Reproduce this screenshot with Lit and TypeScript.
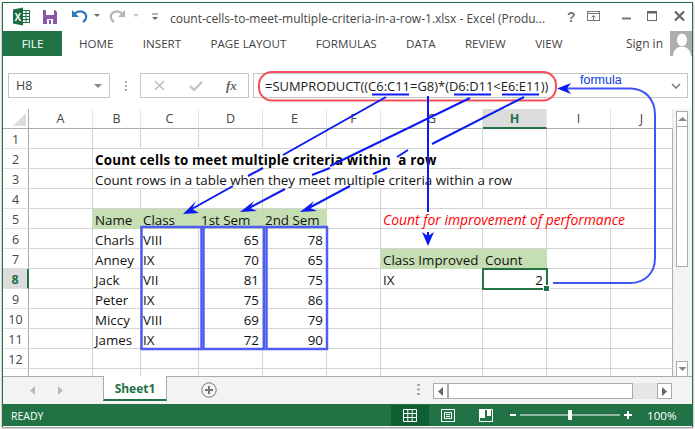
import { LitElement, html, css, svg } from 'lit'
import { customElement } from 'lit/decorators.js'

const COLS = [
  ['A', 64],
  ['B', 48],
  ['C', 58],
  ['D', 64],
  ['E', 64],
  ['F', 54],
  ['G', 102],
  ['H', 64],
  ['I', 64],
  ['J', 62],
] as const

type Cell = { t?: string; c?: string; span?: number }

// sheet content, keyed by row then column
const SHEET: Record<number, Record<string, Cell>> = {
  2: { B: { t: 'Count cells to meet multiple criteria within  a row', c: 'bold', span: 6 } },
  3: { B: { t: 'Count rows in a table when they meet multiple criteria within a row', span: 7 } },
  5: {
    B: { t: 'Name', c: 'fill' },
    C: { t: 'Class', c: 'fill' },
    D: { t: '1st Sem', c: 'fill' },
    E: { t: '2nd Sem', c: 'fill' },
    G: { t: 'Count for improvement of performance', c: 'red', span: 4 },
  },
  6: { B: { t: 'Charls' }, C: { t: 'VIII' }, D: { t: '65', c: 'num' }, E: { t: '78', c: 'num' } },
  7: {
    B: { t: 'Anney' },
    C: { t: 'IX' },
    D: { t: '70', c: 'num' },
    E: { t: '65', c: 'num' },
    G: { t: 'Class Improved', c: 'fill' },
    H: { t: 'Count', c: 'fill' },
  },
  8: {
    B: { t: 'Jack' },
    C: { t: 'VII' },
    D: { t: '81', c: 'num' },
    E: { t: '75', c: 'num' },
    G: { t: 'IX' },
    H: { t: '2', c: 'num active' },
  },
  9: { B: { t: 'Peter' }, C: { t: 'IX' }, D: { t: '75', c: 'num' }, E: { t: '86', c: 'num' } },
  10: { B: { t: 'Miccy' }, C: { t: 'VIII' }, D: { t: '69', c: 'num' }, E: { t: '79', c: 'num' } },
  11: { B: { t: 'James' }, C: { t: 'IX' }, D: { t: '72', c: 'num' }, E: { t: '90', c: 'num' } },
}

const BLUE = '#0a1cf0'

// arrow shafts, broken where the original has gaps over the cell text
const SEGMENTS = [
  [372, 94.5, 409, 94.5],
  [454, 94.5, 491, 94.5],
  [502, 94.5, 539, 94.5],
  [386, 97, 283, 155],
  [263, 168, 248, 176],
  [233, 186, 190, 210],
  [470, 98, 330, 166],
  [330, 168, 312, 175],
  [285, 189, 247, 209],
  [524, 97, 432, 144],
  [408, 150, 397, 157],
  [387, 168, 373, 174],
  [350, 186, 307, 209],
  [428, 96, 428, 212],
  [428, 232, 428, 242],
]

const HEADS = [
  '183,214 196,201 192,209 199,213',
  '240,212 254,201 250,208 257,211',
  '300,212 314,201 310,208 317,211',
  '428,246 422,232 428,236 434,232',
  '557,88.5 571,83 567,88.5 571,94',
]

@customElement('app-root')
export class AppRoot extends LitElement {
  static styles = css`
    :host {
      display: block;
      position: relative;
      width: 695px;
      height: 429px;
      overflow: hidden;
      background: #fff;
      font-family: 'Open Sans', 'Liberation Sans', sans-serif;
      color: #444;
    }
    .window {
      position: absolute;
      left: 2px;
      top: 2px;
      width: 691px;
      height: 425px;
      box-sizing: border-box;
      border: 1px solid #217346;
      border-bottom: 0;
      box-shadow: 0 1px 2px #777;
      display: flex;
      flex-direction: column;
      background: #fff;
    }
    svg {
      display: block;
      flex: none;
    }

    /* title bar */
    .title {
      height: 28px;
      display: flex;
      align-items: center;
      padding-left: 10px;
      font-size: 12px;
      position: relative;
    }
    .title .qat {
      width: 157px;
      flex: none;
    }
    .title .name {
      flex: 1;
      white-space: nowrap;
      margin-top: 2px;
    }
    .title .ctrl {
      margin-right: 6px;
    }

    /* ribbon tabs */
    .tabs {
      height: 25px;
      display: flex;
      align-items: center;
      font-size: 11.6px;
      gap: 29.4px;
    }
    .tabs .file {
      width: 59px;
      height: 25px;
      line-height: 25px;
      background: #217346;
      color: #fff;
      text-align: center;
      margin-right: -12.4px;
    }
    .tabs .sign {
      margin-left: auto;
      margin-right: -22.4px;
      font-size: 12px;
    }

    /* formula bar */
    .fbar {
      display: flex;
      align-items: stretch;
      padding: 17px 4px 11px 5px;
      height: 25px;
      font-size: 12.95px;
      color: #222;
    }
    .box {
      border: 1px solid #c6c6c6;
      box-sizing: border-box;
      display: flex;
      align-items: center;
    }
    .namebox {
      width: 102px;
      padding: 0 7px;
      justify-content: space-between;
      font-size: 12.5px;
      color: #444;
    }
    .grip {
      width: 30px;
    }
    .fxbox {
      width: 109px;
      margin-right: 4px;
    }
    .formula {
      flex: 1;
      padding: 0 6px 0 11px;
      justify-content: space-between;
      white-space: nowrap;
    }

    /* sheet */
    .mid {
      display: flex;
      height: 267px;
    }
    .grid {
      width: 670px;
      height: 267px;
      overflow: hidden;
      display: grid;
      grid-template-columns: 26px repeat(10, auto);
      grid-auto-rows: 20px;
      font-size: 13.35px;
      color: #111;
    }
    .hd {
      box-sizing: border-box;
      display: flex;
      align-items: center;
      justify-content: center;
      color: #444;
      font-size: 12.5px;
      background: #fff;
    }
    .hd.col {
      border-bottom: 1px solid #ababab;
      border-right: 1px solid #e6e6e6;
    }
    .hd.row {
      border-right: 1px solid #ababab;
      border-bottom: 1px solid #e0e0e0;
      padding-top: 1px;
    }
    .hd.sel {
      background: #dcdcdc;
      color: #217346;
      font-weight: 700;
    }
    .hd.col.sel {
      border-bottom: 2px solid #217346;
    }
    .hd.row.sel {
      border-right: 2px solid #217346;
    }
    .corner {
      border-bottom: 1px solid #ababab;
      border-right: 1px solid #ababab;
      box-sizing: border-box;
      padding: 4px 0 0 10px;
    }
    .cell {
      box-sizing: border-box;
      border-right: 1px solid #d4d4d4;
      border-bottom: 1px solid #d4d4d4;
      padding: 0 2px;
      white-space: pre;
      line-height: 22px;
      position: relative;
    }
    .cell.edge {
      border-right-color: #ababab;
    }
    .cell.bold {
      font-weight: 700;
      color: #000;
      letter-spacing: 0.2px;
    }
    .cell.fill {
      background: #c5dfb3;
      border-color: #c5dfb3;
    }
    .cell.red {
      color: #f00;
      font-style: italic;
      font-size: 13.9px;
    }
    .cell.num {
      text-align: right;
      padding-right: 3px;
    }
    .cell.active {
      outline: 2px solid #217346;
      outline-offset: -1px;
      z-index: 1;
    }
    .cell.active::after {
      content: '';
      position: absolute;
      right: -3px;
      bottom: -3px;
      width: 5px;
      height: 5px;
      background: #217346;
      border: 1px solid #fff;
      box-sizing: content-box;
      margin: -1px;
    }

    /* vertical scrollbar */
    .vscroll {
      width: 19px;
      background: #f3f3f3;
      display: flex;
      flex-direction: column;
      padding: 2px 4px 0 3px;
      box-sizing: border-box;
      height: 268px;
    }
    .sbtn {
      border: 1px solid #ababab;
      background: #fff;
      box-sizing: border-box;
      display: flex;
      align-items: center;
      justify-content: center;
      flex: none;
    }
    .vscroll .sbtn {
      height: 16px;
    }
    .vscroll .thumb {
      height: 140px;
      border: 1px solid #ababab;
      border-top: 0;
      background: #fff;
      box-sizing: border-box;
    }
    .vscroll .spacer {
      flex: 1;
    }

    /* sheet tabs */
    .sheets {
      height: 28px;
      background: #f3f3f3;
      display: flex;
      border-top: 1px solid #ababab;
      box-sizing: border-box;
    }
    .nav {
      width: 100px;
      display: flex;
      align-items: center;
      gap: 23px;
      padding-left: 27px;
      box-sizing: border-box;
    }
    .sheet {
      width: 64px;
      height: 25px;
      margin-top: -1px;
      background: #fff;
      box-sizing: border-box;
      border-left: 1px solid #ababab;
      border-right: 1px solid #ababab;
      border-bottom: 2px solid #217346;
      color: #217346;
      font-weight: 700;
      font-size: 12px;
      text-align: center;
      line-height: 26px;
    }
    .plus {
      margin: 5px 0 0 34px;
    }
    .dots {
      margin: 7px 0 0 200px;
    }
    .hscroll {
      margin: 6px 0 0 13px;
      width: 239px;
      height: 16px;
      display: flex;
      background: #e6e6e6;
    }
    .hscroll .sbtn {
      width: 15px;
    }
    .hscroll .thumb {
      width: 185px;
      background: #fff;
      border: 1px solid #ababab;
      box-sizing: border-box;
    }
    .hscroll .spacer {
      flex: 1;
    }

    /* status bar */
    .status {
      height: 22px;
      background: #217346;
      color: #fff;
      display: flex;
      align-items: center;
      font-size: 10.5px;
      padding-left: 8px;
      position: relative;
    }
    .status .ready {
      width: 380px;
      flex: none;
      padding-top: 1px;
    }
    .view {
      width: 38px;
      height: 21px;
      display: flex;
      align-items: center;
      justify-content: center;
    }
    .view.on {
      background: #0f5f33;
    }
    .zoom {
      font-size: 11.6px;
      margin-left: 10px;
    }

    /* annotations drawn over the sheet */
    .notes {
      position: absolute;
      left: 0;
      top: 0;
      pointer-events: none;
    }
    .notes text {
      font-family: 'Liberation Sans', sans-serif;
      font-size: 12.5px;
      fill: #0a3ce0;
    }
  `

  private tri(color = '#777', w = 8, h = 4) {
    return html`<svg width=${w} height=${h} viewBox="0 0 8 4"><path d="M0 0h8L4 4z" fill=${color} /></svg>`
  }

  private renderQat() {
    return html`<svg class="qat" height="20" viewBox="0 0 157 20">
      <path d="M0 2.500 10 0.500v18l-10-2z" fill="#1d6f42" />
      <rect x="9.500" y="3.500" width="7" height="12" fill="#fff" stroke="#1d6f42" />
      <path d="M10 6.500h6M10 9.500h6M10 12.500h6M13 4v11" stroke="#1d6f42" />
      <text x="1.500" y="13.500" font-family="Liberation Sans" font-weight="700" font-size="10" fill="#fff">X</text>
      <path d="M30 3h12l2 2v12H30z" fill="#8b55a8" />
      <rect x="33" y="3" width="8" height="5" fill="#fff" />
      <rect x="34" y="12" width="6" height="5" fill="#fff" />
      <rect x="36" y="13" width="2" height="4" fill="#8b55a8" />
      <path d="M61 7c6-5 13-2 12 4-.4 2-1.500 3-3 4" fill="none" stroke="#2d78bd" stroke-width="2.200" />
      <path d="M59 3v7h7z" fill="#2d78bd" />
      <path d="M81 7h6l-3 3z" fill="#666" />
      <path d="M110 7c-6-5-13-2-12 4 .4 2 1.500 3 3 4" fill="none" stroke="#b4b4b4" stroke-width="2.200" />
      <path d="M112 3v7h-7z" fill="#b4b4b4" />
      <path d="M120 7h6l-3 3z" fill="#c4c4c4" />
      <path d="M139 7h6" stroke="#666" />
      <path d="M139 10h6l-3 3z" fill="#666" />
    </svg>`
  }

  private renderCtrl() {
    return html`<svg class="ctrl" width="119" height="16" viewBox="0 0 119 16">
      <text x="0" y="13" font-family="Liberation Sans" font-weight="700" font-size="14" fill="#777">?</text>
      <rect x="20.500" y="2.500" width="12" height="9" fill="none" stroke="#777" />
      <path d="M21 4.500h11" stroke="#777" />
      <path d="M26.500 11V6.500M24.500 8.500l2-2 2 2" fill="none" stroke="#777" />
      <path d="M55 9.500h9" stroke="#777" stroke-width="2" />
      <rect x="80.500" y="2.500" width="9" height="9" fill="none" stroke="#666" />
      <path d="M80 3.500h10" stroke="#666" stroke-width="2" />
      <path d="M108 2.500l9 9M117 2.500l-9 9" stroke="#666" stroke-width="2.200" />
    </svg>`
  }

  private renderAvatar() {
    return html`<svg width="22" height="25" viewBox="0 0 22 25">
      <rect width="22" height="25" fill="#aeaeae" />
      <ellipse cx="12" cy="9" rx="5" ry="6.500" fill="#fff" />
      <path d="M3 25c0-6 4-8 6-9h6c2 1 6 3 6 9z" fill="#fff" />
    </svg>`
  }

  private renderGrid() {
    const rows = Array.from({ length: 13 }, (_, i) => i + 1)
    return html`<div class="grid">
      <div class="corner">
        <svg width="13" height="13" viewBox="0 0 13 13"><path d="M13 0v13H0z" fill="#dcdcdc" /></svg>
      </div>
      ${COLS.map(
        ([name, w]) =>
          html`<div class="hd col ${name === 'H' ? 'sel' : ''}" style="width:${w}px">${name}</div>`,
      )}
      ${rows.map((r) => {
        const cells = SHEET[r] ?? {}
        let skip = 0
        // row 13 is only a sliver in the window, its number does not show
        return html`<div class="hd row ${r === 8 ? 'sel' : ''}">${r < 13 ? r : ''}</div>
          ${COLS.map(([name], i) => {
            if (skip > 0) {
              skip--
              return ''
            }
            const cell = cells[name] ?? {}
            const span = cell.span ?? 1
            skip = span - 1
            const edge = i + span === COLS.length ? 'edge' : ''
            return html`<div class="cell ${cell.c ?? ''} ${edge}" style="grid-column:span ${span}">${cell.t ?? ''}</div>`
          })}`
      })}
    </div>`
  }

  private renderNotes() {
    return html`<svg class="notes" width="695" height="429" viewBox="0 0 695 429">
      <rect x="259" y="72" width="297" height="28.500" rx="13" fill="none" stroke="#f2505a" stroke-width="2" />
      ${[141.5, 203.5, 266.5].map(
        (x, i) =>
          svg`<rect x=${x} y="227" width=${i === 0 ? 60 : 60.5} height="122" fill="none" stroke="#4f5df2" stroke-width="2.500" />`,
      )}
      <path
        d="M553 283H630C645 283 655 273 655 258V115C655 99 645 88.500 630 88.500H562"
        fill="none"
        stroke="#3f55f5"
        stroke-width="2"
      />
      ${SEGMENTS.map(
        ([x1, y1, x2, y2]) =>
          svg`<line x1=${x1} y1=${y1} x2=${x2} y2=${y2} stroke=${BLUE} stroke-width="2" />`,
      )}
      ${HEADS.map((p) => svg`<polygon points=${p} fill=${BLUE} />`)}
      <text x="580" y="84">formula</text>
    </svg>`
  }

  render() {
    return html`
      <div class="window">
        <div class="title">
          ${this.renderQat()}
          <div class="name">count-cells-to-meet-multiple-criteria-in-a-row-1.xlsx - Excel (Produ...</div>
          ${this.renderCtrl()}
        </div>
        <div class="tabs">
          <div class="file">FILE</div>
          <div>HOME</div>
          <div>INSERT</div>
          <div>PAGE LAYOUT</div>
          <div>FORMULAS</div>
          <div>DATA</div>
          <div>REVIEW</div>
          <div>VIEW</div>
          <div class="sign">Sign in</div>
          ${this.renderAvatar()}
        </div>
        <div class="fbar">
          <div class="box namebox">H8 ${this.tri('#888', 8, 4)}</div>
          <div class="grip">
            <svg width="30" height="25" viewBox="0 0 30 25">
              <path d="M15 8h2v2h-2zM15 12h2v2h-2zM15 16h2v2h-2z" fill="#aaa" />
            </svg>
          </div>
          <div class="box fxbox">
            <svg width="107" height="23" viewBox="0 0 107 23">
              <path d="M14 7l9 9M23 7l-9 9" stroke="#c0c0c0" stroke-width="1.600" />
              <path d="M49 12l4 4 8-8" fill="none" stroke="#c0c0c0" stroke-width="2.200" />
              <text x="85" y="16" font-family="Liberation Serif" font-style="italic" font-weight="700" font-size="13" fill="#666">fx</text>
            </svg>
          </div>
          <div class="box formula">
            =SUMPRODUCT((C6:C11=G8)*(D6:D11&lt;E6:E11))
            <svg width="10" height="6" viewBox="0 0 10 6"><path d="M1 1l4 4 4-4" fill="none" stroke="#777" stroke-width="1.500" /></svg>
          </div>
        </div>
        <div class="mid">
          ${this.renderGrid()}
          <div class="vscroll">
            <div class="sbtn">
              <svg width="9" height="4" viewBox="0 0 9 4"><path d="M0 4h9L4.500 0z" fill="#888" /></svg>
            </div>
            <div class="thumb"></div>
            <div class="spacer"></div>
            <div class="sbtn">${this.tri('#888', 9, 4)}</div>
          </div>
        </div>
        <div class="sheets">
          <div class="nav">
            <svg width="5" height="9" viewBox="0 0 5 9"><path d="M5 0v9L0 4.500z" fill="#bbb" /></svg>
            <svg width="5" height="9" viewBox="0 0 5 9"><path d="M0 0v9l5-4.500z" fill="#bbb" /></svg>
          </div>
          <div class="sheet">Sheet1</div>
          <svg class="plus" width="16" height="16" viewBox="0 0 16 16">
            <circle cx="8" cy="8" r="7.200" fill="none" stroke="#777" />
            <path d="M8 4v8M4 8h8" stroke="#777" stroke-width="2" />
          </svg>
          <svg class="dots" width="3" height="11" viewBox="0 0 3 11">
            <path d="M0 0h3v2H0zM0 4.500h3v2H0zM0 9h3v2H0z" fill="#aaa" />
          </svg>
          <div class="hscroll">
            <div class="sbtn">
              <svg width="5" height="9" viewBox="0 0 5 9"><path d="M5 0v9L0 4.500z" fill="#666" /></svg>
            </div>
            <div class="thumb"></div>
            <div class="spacer"></div>
            <div class="sbtn">
              <svg width="5" height="9" viewBox="0 0 5 9"><path d="M0 0v9l5-4.500z" fill="#666" /></svg>
            </div>
          </div>
        </div>
        <div class="status">
          <div class="ready">READY</div>
          <div class="view on">
            <svg width="14" height="13" viewBox="0 0 14 13">
              <path d="M.5.500h13v12H.5zM.5 4.500h13M.5 8.500h13M4.800.500v12M9.200.500v12" fill="none" stroke="#fff" />
            </svg>
          </div>
          <div class="view">
            <svg width="14" height="13" viewBox="0 0 14 13">
              <path d="M.5.500h13v12H.5z" fill="none" stroke="#fff" />
              <path d="M3.500 3.500h7v6h-7zM5 5.500h4M5 7.500h4" fill="none" stroke="#fff" />
            </svg>
          </div>
          <div class="view">
            <svg width="14" height="13" viewBox="0 0 14 13">
              <path d="M.5.500h13v12H.5z" fill="none" stroke="#fff" />
              <path d="M0 0h6v9H0zM8 0h4v7H8z" fill="#fff" />
            </svg>
          </div>
          <svg width="132" height="12" viewBox="0 0 132 12">
            <path d="M5 5h6v2H5z" fill="#fff" />
            <path d="M15 6h100" stroke="#fff" />
            <rect x="63" y="1" width="4" height="10" fill="#fff" />
            <path d="M119 5h8v2h-8zM122 2h2v8h-2z" fill="#fff" />
          </svg>
          <div class="zoom">100%</div>
        </div>
      </div>
      ${this.renderNotes()}
    `
  }
}
